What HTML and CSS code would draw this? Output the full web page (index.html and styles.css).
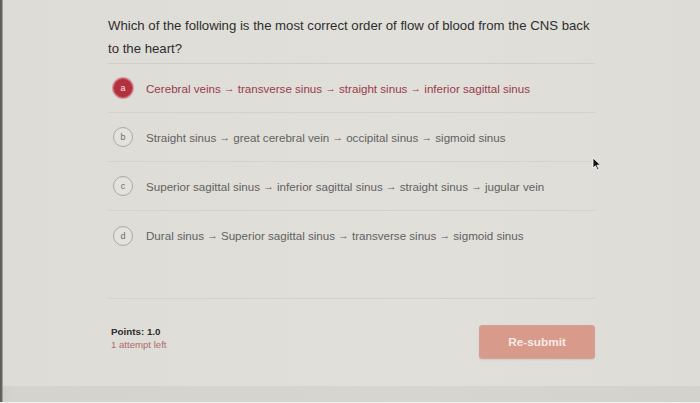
FILE: index.html
```html
<!DOCTYPE html>
<html>
<head>
<meta charset="utf-8">
<link rel="stylesheet" href="styles.css">
</head>
<body>
<div class="screen">
  <div class="card">
    <div class="question">Which of the following is the most correct order of flow of blood from the CNS back to the heart?</div>
    <div class="options">
      <div class="option selected"><span class="letter">a</span><span class="text">Cerebral veins <span class="arr">→</span> transverse sinus <span class="arr">→</span> straight sinus <span class="arr">→</span> inferior sagittal sinus</span></div>
      <div class="option"><span class="letter">b</span><span class="text">Straight sinus <span class="arr">→</span> great cerebral vein <span class="arr">→</span> occipital sinus <span class="arr">→</span> sigmoid sinus</span></div>
      <div class="option"><span class="letter">c</span><span class="text">Superior sagittal sinus <span class="arr">→</span> inferior sagittal sinus <span class="arr">→</span> straight sinus <span class="arr">→</span> jugular vein</span></div>
      <div class="option last"><span class="letter">d</span><span class="text">Dural sinus <span class="arr">→</span> Superior sagittal sinus <span class="arr">→</span> transverse sinus <span class="arr">→</span> sigmoid sinus</span></div>
    </div>
    <div class="footer">
      <div class="points">
        <div class="pts">Points: 1.0</div>
        <div class="attempt">1 attempt left</div>
      </div>
      <button class="resubmit">Re-submit</button>
    </div>
  </div>
  <svg class="cursor" width="10" height="14" viewBox="0 0 10 14"><path d="M1 1 L1 11 L3.5 8.8 L5.5 13 L7 12.3 L5 8.2 L8.5 8 Z" fill="#111" stroke="#fff" stroke-width="0.8"/></svg>
</div>
</body>
</html>
```
FILE: styles.css
```css
html, body {
  margin: 0;
  padding: 0;
}
body {
  width: 700px;
  height: 403px;
  overflow: hidden;
  background: #cfcec8;
  font-family: "Liberation Sans", Arial, sans-serif;
}
.screen {
  position: relative;
  width: 700px;
  height: 403px;
  background: linear-gradient(to right, #5a5a58 0, #6a6a66 2px, #d0cfc9 3px, #d4d3cd 12px, #d6d5cf 60%, #d3d2cc 100%);
  border-bottom: 1px solid #f2f2ee;
  box-sizing: border-box;
}
.card {
  padding: 14px 105px 0 105px;
  height: 386px;
  box-sizing: border-box;
  margin-left: 3px;
  background: linear-gradient(to right, #dddcd6 0, #e0dfd9 60%, #dddcd6 100%);
}
.question {
  font-size: 13.2px;
  line-height: 23px;
  color: #2e2e2e;
  width: 487px;
  padding-bottom: 3px;
  border-bottom: 1px solid #cfcec8;
}
.option {
  display: flex;
  align-items: center;
  height: 48px;
  padding-left: 5px;
  border-bottom: 1px solid #d3d2cc;
}
.option.last {
  border-bottom: none;
  height: 49px;
}
.letter {
  width: 18px;
  height: 18px;
  border: 1px solid #a9a9a5;
  border-radius: 50%;
  display: flex;
  align-items: center;
  justify-content: center;
  font-size: 9px;
  color: #6b6b6b;
  margin-right: 13px;
  flex-shrink: 0;
  background: #e3e2dc;
}
.selected .letter {
  background: #b3303e;
  border-color: #c75a66;
  color: #f4e6e8;
  box-shadow: 0 0 0 1px #d39ca2;
}
.text {
  font-size: 11.6px;
  color: #5f6262;
  white-space: nowrap;
}
.selected .text {
  color: #9c3a4c;
}
.arr {
  font-size: 10.5px;
  position: relative;
  top: -1px;
}
.footer {
  display: flex;
  justify-content: space-between;
  align-items: flex-start;
  margin-top: 38px;
  padding-top: 24px;
  border-top: 1px solid #d3d2cc;
  width: 487px;
}
.points {
  padding-left: 3px;
  padding-top: 2px;
}
.pts {
  font-size: 9.8px;
  font-weight: bold;
  color: #2c2c2c;
  line-height: 13px;
}
.attempt {
  font-size: 9.6px;
  color: #b16a6e;
  line-height: 14px;
}
.resubmit {
  width: 116px;
  height: 34px;
  margin-top: 2px;
  background: #d89a8b;
  border: 1px solid #d6a092;
  border-radius: 3px;
  color: #f7ebe7;
  font-family: "Liberation Sans", Arial, sans-serif;
  font-size: 11.8px;
  font-weight: bold;
  box-shadow: 0 1px 2px rgba(0,0,0,0.08);
}
.cursor {
  position: absolute;
  left: 592px;
  top: 157px;
}
```
